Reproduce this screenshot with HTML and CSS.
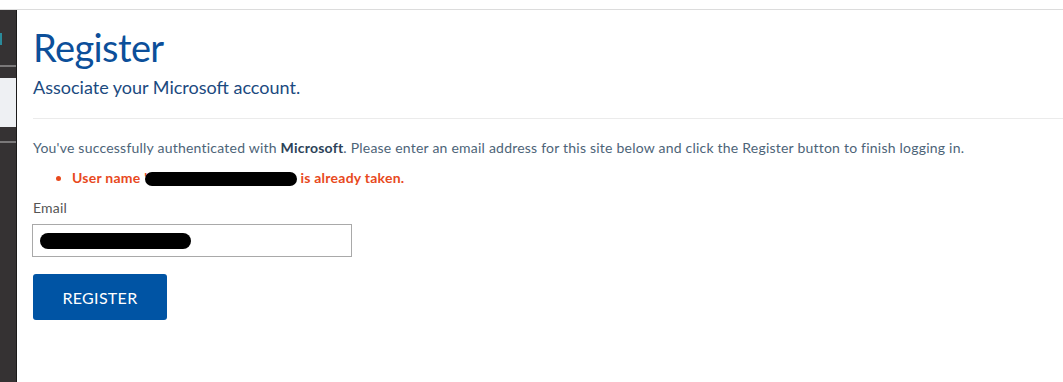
FILE: index.html
```html
<!doctype html>
<html>
    <head>
        <link rel="stylesheet" href="styles.css">
    </head>
    <body>
        <div class="topbar"></div>
        <div class="page">
            <div class="rail">
                <div class="rail-top"><span class="rail-tab"></span></div>
                <div class="rail-line"></div>
                <div class="rail-gap"></div>
                <div class="rail-light"></div>
                <div class="rail-dark"></div>
                <div class="rail-line"></div>
            </div>
            <div class="content">
                <h1 class="title">Register</h1>
                <h2 class="subtitle">Associate your Microsoft account.</h2>
                <hr class="rule">
                <p class="info">You've successfully authenticated with <strong>Microsoft</strong>. Please enter an email address for this site below and click the Register button to finish logging in.</p>
                <ul class="errors">
                    <li>User name '<span class="blot blot-name"></span>is already taken.</li>
                </ul>
                <form class="regform" onsubmit="return false;">
                    <label class="label" for="email">Email</label>
                    <div class="field">
                        <input class="input" type="text" id="email" value="">
                        <span class="blot blot-email"></span>
                    </div>
                    <button class="btn" type="submit">REGISTER</button>
                </form>
            </div>
        </div>
    </body>
</html>
```

FILE: styles.css
```css
html, body {
    margin: 0;
    height: 100%;
    background: #fff;
}
body {
    font-family: Lato, "Noto Sans", sans-serif;
    overflow: hidden;
}
.topbar {
    height: 9px;
    border-bottom: 1px solid #dcdcdc;
}
.page {
    display: flex;
    height: 372px;
}
.rail {
    width: 16px;
    border-right: 1px solid #1b1a1a;
    background: #353233;
    display: flex;
    flex-direction: column;
}
.rail-top {
    height: 55px;
    position: relative;
}
.rail-tab {
    position: absolute;
    left: 0;
    top: 23px;
    width: 2px;
    height: 12px;
    background: #2a8a9a;
}
.rail-line {
    height: 2px;
    background: #7a7879;
}
.rail-gap {
    height: 11px;
}
.rail-light {
    height: 49px;
    background: #eef0f3;
}
.rail-dark {
    height: 14px;
}
.content {
    flex: 1;
    padding-left: 16px;
}
.title {
    margin: 15px 0 0;
    font-size: 38px;
    line-height: 44px;
    font-weight: 400;
    letter-spacing: -0.6px;
    color: #0c4f9a;
}
.subtitle {
    margin: 6px 0 0;
    font-size: 18px;
    line-height: 24px;
    font-weight: 400;
    color: #1b4a80;
}
.rule {
    margin: 19px 0 0;
    border: 0;
    border-top: 1px solid #ebebeb;
}
.info {
    margin: 19px 0 0;
    font-size: 14px;
    line-height: 20px;
    letter-spacing: 0.22px;
    color: #4d6478;
}
.info strong {
    color: #2c4258;
}
.errors {
    margin: 10px 0 0;
    padding-left: 39px;
    font-size: 14px;
    line-height: 20px;
    font-weight: bold;
    letter-spacing: 0.25px;
    color: #e8491d;
}
.blot {
    display: inline-block;
    background: #000;
    border-radius: 8px;
    vertical-align: middle;
}
.blot-name {
    width: 152px;
    height: 14px;
    margin: 0 3px 0 -2px;
}
.label {
    display: block;
    margin-top: 10px;
    font-size: 14px;
    line-height: 20px;
    letter-spacing: 0.2px;
    color: #555;
}
.field {
    position: relative;
    margin-top: 6px;
    width: 320px;
}
.input {
    box-sizing: border-box;
    width: 320px;
    height: 33px;
    margin: 0 0 0 -1px;
    border: 1px solid #a9a9a9;
    padding: 4px 8px;
    font-size: 14px;
}
.blot-email {
    position: absolute;
    left: 7px;
    top: 9px;
    width: 151px;
    height: 16px;
}
.btn {
    display: block;
    margin-top: 17px;
    width: 134px;
    height: 46px;
    border: 0;
    border-radius: 3px;
    background: #0054a4;
    color: #fff;
    font-family: Lato, "Noto Sans", sans-serif;
    font-size: 16px;
    letter-spacing: 0.3px;
    cursor: pointer;
}
```
